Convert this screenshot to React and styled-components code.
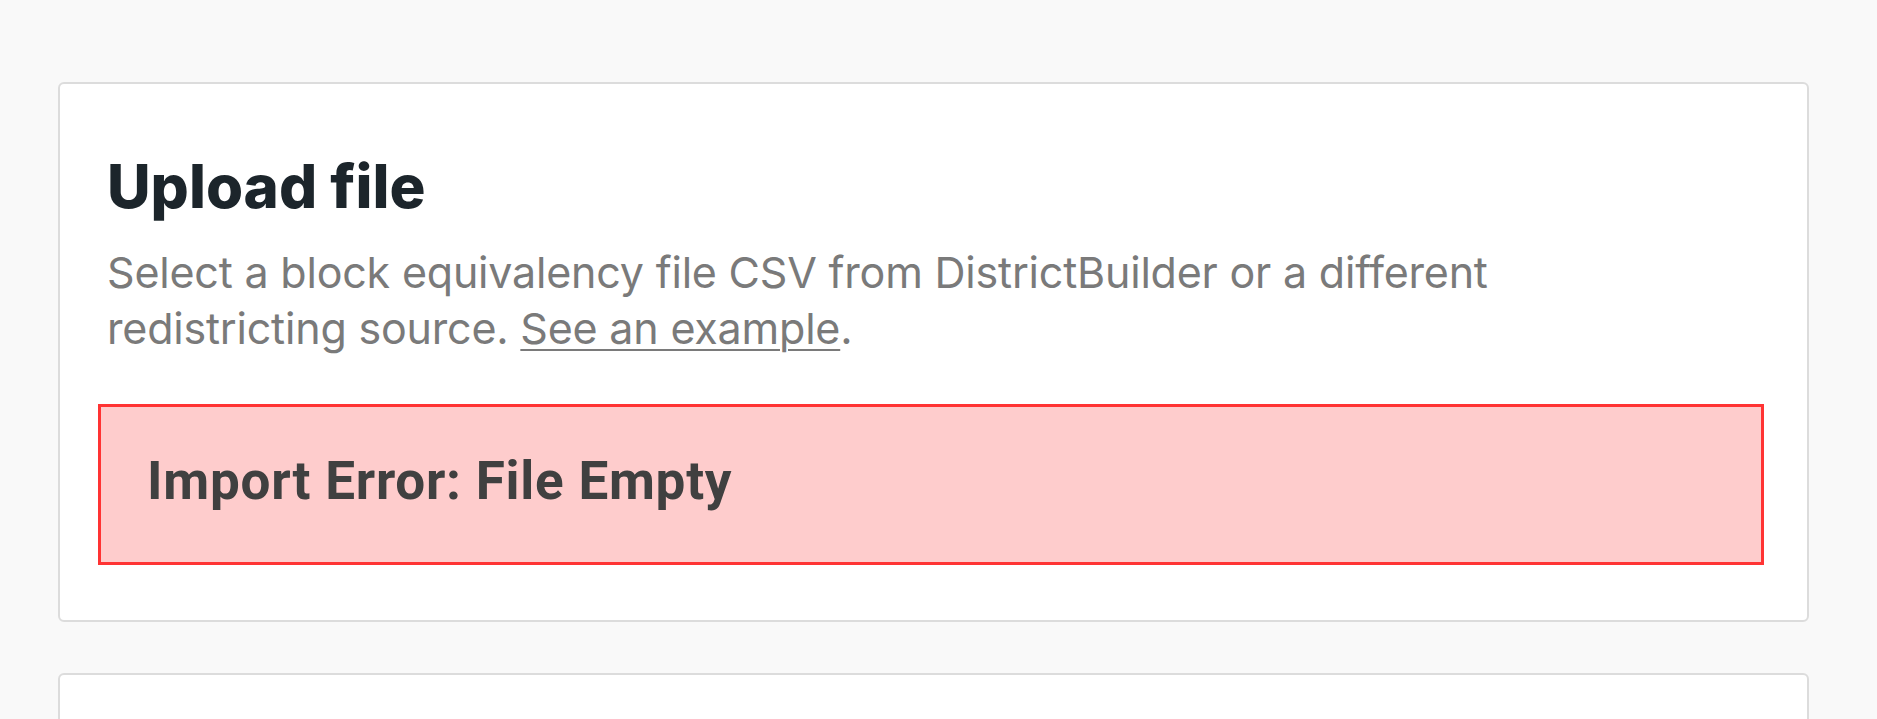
import React from "react";
import styled, { createGlobalStyle } from "styled-components";

const GlobalStyle = createGlobalStyle`
  html, body {
    margin: 0;
    padding: 0;
    background: #f9f9f9;
    font-family: Inter, "Noto Sans", sans-serif;
  }
`;

const Page = styled.main`
  padding: 82px 68px 0 58px;
  display: flex;
  flex-direction: column;
  gap: 51px;
  height: 719px;
  overflow: hidden;
  box-sizing: border-box;
`;

const Card = styled.section`
  background: #fff;
  border: 2px solid #dcdcdc;
  border-radius: 6px;
  padding: ${props => (props.empty ? "0" : "66px 43px 55px 38px")};
  min-height: ${props => (props.empty ? "200px" : "auto")};
  flex-shrink: 0;
`;

const Intro = styled.div`
  padding-left: 9px;
  margin-bottom: 48px;
`;

const Title = styled.h2`
  margin: 0 0 22px;
  font-size: 60px;
  line-height: 72px;
  font-weight: 800;
  color: #1c252b;
`;

const Lead = styled.p`
  margin: 0;
  max-width: 1420px;
  font-size: 43px;
  line-height: 56px;
  letter-spacing: -0.2px;
  color: #7a7a7a;
`;

const Link = styled.a`
  color: inherit;
  text-decoration: underline;
  text-underline-offset: 5px;
  text-decoration-thickness: 2px;
`;

const ErrorBox = styled.div`
  background: #fecccc;
  border: 3px solid #ff3333;
  padding: 42px 48px 49px 46px;
  font-family: Roboto, "Liberation Sans", sans-serif;
  font-weight: 700;
  font-size: 53px;
  line-height: 64px;
  letter-spacing: 0.75px;
  color: #404040;
`;

const App = () => (
  <>
    <GlobalStyle />
    <Page>
      <Card>
        <Intro>
          <Title>Upload file</Title>
          <Lead>
            Select a block equivalency file CSV from DistrictBuilder or a different
            redistricting source. <Link href="#">See an example</Link>.
          </Lead>
        </Intro>
        <ErrorBox>Import Error: File Empty</ErrorBox>
      </Card>
      <Card empty />
    </Page>
  </>
);

export default App;
